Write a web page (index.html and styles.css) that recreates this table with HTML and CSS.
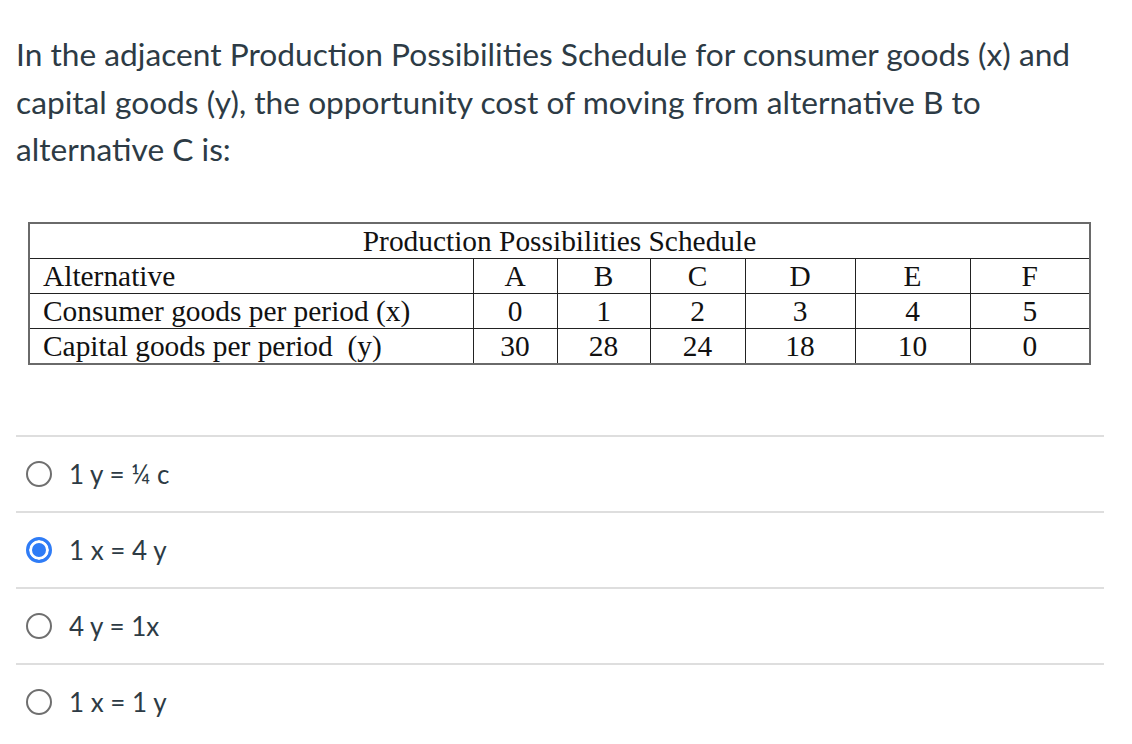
FILE: index.html
```html
<!DOCTYPE html>
<html lang="en">
<head>
<meta charset="utf-8">
<title>Question</title>
<link rel="stylesheet" href="styles.css">
</head>
<body>
<div class="page">
  <p class="question">In the adjacent Production Possibilities Schedule for consumer goods (x) and capital goods (y), the opportunity cost of moving from alternative B to alternative C is:</p>
  <table class="pps">
    <colgroup>
      <col class="c-label"><col class="c-a"><col class="c-b"><col class="c-c"><col class="c-d"><col class="c-e"><col class="c-f">
    </colgroup>
    <tr><td class="title" colspan="7">Production Possibilities Schedule</td></tr>
    <tr><td class="label">Alternative</td><td>A</td><td>B</td><td>C</td><td>D</td><td>E</td><td>F</td></tr>
    <tr><td class="label">Consumer goods per period (x)</td><td>0</td><td>1</td><td>2</td><td>3</td><td>4</td><td>5</td></tr>
    <tr><td class="label">Capital goods per period&nbsp; (y)</td><td>30</td><td>28</td><td>24</td><td>18</td><td>10</td><td>0</td></tr>
  </table>
  <div class="answers">
    <label class="answer"><span class="radio"></span><span class="answer-text">1 y = ¼ c</span></label>
    <label class="answer"><span class="radio checked"></span><span class="answer-text">1 x = 4 y</span></label>
    <label class="answer"><span class="radio"></span><span class="answer-text">4 y = 1x</span></label>
    <label class="answer"><span class="radio"></span><span class="answer-text">1 x = 1 y</span></label>
  </div>
</div>
</body>
</html>
```

FILE: styles.css
```css
html, body {
  margin: 0;
  padding: 0;
  background: #ffffff;
}

.page {
  padding: 31px 28px 0 16px;
  font-family: Lato, "Liberation Sans", sans-serif;
  color: #2d3b45;
}

.question {
  margin: 0;
  font-size: 31.7px;
  line-height: 47.5px;
}

.pps {
  margin: 48px 0 0 12px;
  border-collapse: collapse;
  table-layout: fixed;
  width: 1061px;
  font-family: "Liberation Serif", "Times New Roman", serif;
  font-size: 29.4px;
  color: #111;
  border: 2px solid #6a6a6a;
}

.c-label { width: 444px; }
.c-a { width: 84px; }
.c-b { width: 93px; }
.c-c { width: 95px; }
.c-d { width: 110px; }
.c-e { width: 115px; }
.c-f { width: 120px; }

.pps td {
  border: 1.5px solid #222;
  height: 34px;
  padding: 0;
  line-height: 30px;
  text-align: center;
  vertical-align: middle;
}

.pps td.label {
  text-align: left;
  padding-left: 13px;
}

.pps td.title {
  text-align: center;
}

.answers {
  margin-top: 70px;
}

.answer {
  display: flex;
  align-items: center;
  gap: 17px;
  height: 74px;
  padding-left: 10px;
  border-top: 2px solid #dedede;
  font-size: 26px;
}

.radio {
  box-sizing: border-box;
  width: 26px;
  height: 26px;
  border-radius: 50%;
  border: 2px solid #6f6f6f;
  flex: none;
}

.radio.checked {
  border: 3px solid #2f7cf6;
  background: #2f7cf6;
  box-shadow: inset 0 0 0 3px #ffffff;
}
```
